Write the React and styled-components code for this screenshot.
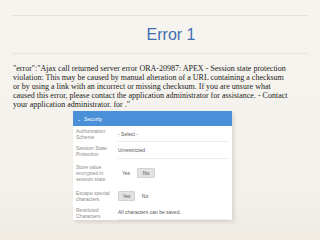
import styled, { createGlobalStyle } from "styled-components";

const GlobalStyle = createGlobalStyle`
  html, body {
    margin: 0;
    padding: 0;
    background: #f5f2ec;
  }
`

const SPage = styled.div`
  width: 320px;
  height: 240px;
  overflow: hidden;
  padding-top: 15px;
  box-sizing: border-box;
  background: linear-gradient(180deg, #f6f4ef 0%, #f4f1eb 80%, #efebe3 100%);
`

const STitleBar = styled.div`
  display: flex;
  justify-content: center;
  align-items: center;
  height: 37px;
  margin: 0 12px;
  padding-left: 22px;
  border-top: 1px solid #e7e3db;
  border-bottom: 1px solid #e7e3db;
  color: #3f6fb1;
  font-family: "Liberation Sans", Arial, sans-serif;
  font-size: 16px;
`

const SMessage = styled.div`
  margin: 10px 0 0 13px;
  color: #222;
  font-family: "Liberation Serif", "Times New Roman", serif;
  font-size: 8px;
  line-height: 9px;
  white-space: nowrap;
`

const SPanel = styled.div`
  width: 159px;
  margin: 2px 0 0 73px;
  background: white;
  box-shadow: 2px 2px 4px rgba(0, 0, 0, 0.12);
  font-family: "Liberation Sans", Arial, sans-serif;
  font-size: 5px;
  line-height: 6px;
`

const SPanelHeader = styled.div`
  display: flex;
  align-items: center;
  gap: 3px;
  height: 15px;
  padding-left: 4px;
  background: #4a90d9;
  color: white;
`

const SRow = styled.div`
  display: flex;
  align-items: center;
  height: ${({h}) => h}px;
`

const SLabel = styled.div`
  width: 42px;
  padding-left: 3px;
  color: #8c8c8c;
`

const SValue = styled.div`
  display: flex;
  align-items: center;
  gap: 3px;
  flex: 1;
  align-self: stretch;
  margin-right: 3px;
  color: #555;
  border-bottom: ${({line}) => line ? "1px solid #ececec" : "none"};
`

const SToggle = styled.div`
  display: flex;
  justify-content: center;
  align-items: center;
  width: ${({w}) => w}px;
  height: 8px;
  background: ${({on}) => on ? "#e2e2e2" : "transparent"};
  border: 1px solid ${({on}) => on ? "#d2d2d2" : "transparent"};
  border-radius: 1px;
  color: #555;
`

const App = () => {

  return (
  <SPage>
    <GlobalStyle />
    <STitleBar>Error 1</STitleBar>
    <SMessage>
      "error":"Ajax call returned server error ORA-20987: APEX - Session state protection<br/>
      violation: This may be caused by manual alteration of a URL containing a checksum<br/>
      or by using a link with an incorrect or missing checksum. If you are unsure what<br/>
      caused this error, please contact the application administrator for assistance. - Contact<br/>
      your application administrator. for ."
    </SMessage>
    <SPanel>
      <SPanelHeader>
        <span>⌄</span>
        <span>Security</span>
      </SPanelHeader>
      <SRow h={16}>
        <SLabel>Authorization<br/>Scheme</SLabel>
        <SValue line>- Select -</SValue>
      </SRow>
      <SRow h={17}>
        <SLabel>Session State<br/>Protection</SLabel>
        <SValue line>Unrestricted</SValue>
      </SRow>
      <SRow h={27}>
        <SLabel>Store value<br/>encrypted in<br/>session state</SLabel>
        <SValue>
          <SToggle w={14}>Yes</SToggle>
          <SToggle w={16} on>No</SToggle>
        </SValue>
      </SRow>
      <SRow h={19}>
        <SLabel>Escape special<br/>characters</SLabel>
        <SValue>
          <SToggle w={15} on>Yes</SToggle>
          <SToggle w={12}>No</SToggle>
        </SValue>
      </SRow>
      <SRow h={15}>
        <SLabel>Restricted<br/>Characters</SLabel>
        <SValue line>All characters can be saved.</SValue>
      </SRow>
    </SPanel>
  </SPage>
  )

}

export default App;
